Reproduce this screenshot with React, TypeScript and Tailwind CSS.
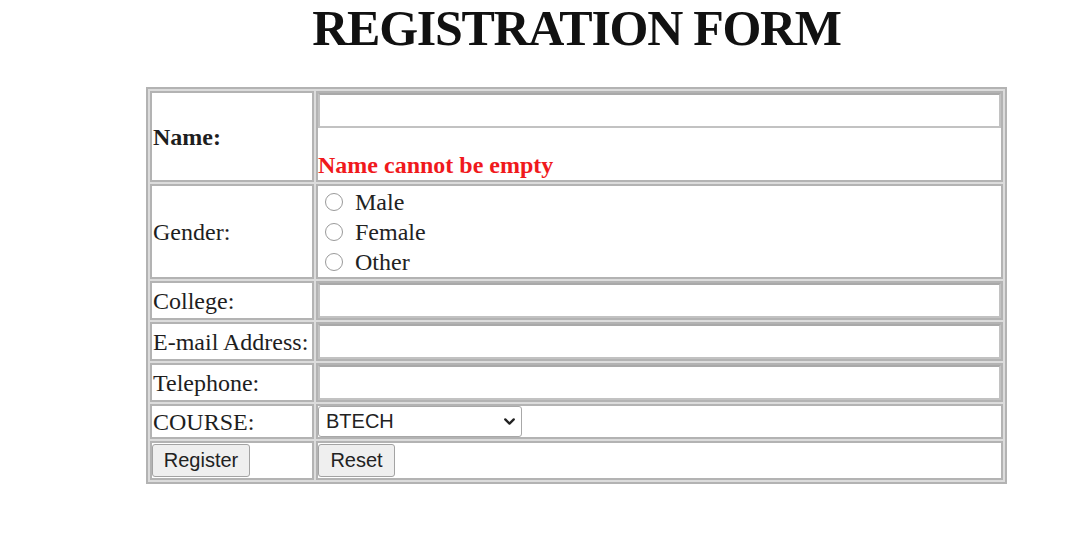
import { ChevronDown } from 'lucide-react'

const serif = "font-['Liberation_Serif','Times_New_Roman',serif]"
const sans = "font-['Liberation_Sans',Arial,sans-serif]"

const cell = 'border-2 border-[#b3b3b3] bg-white'

function Radio({ label }: { label: string }) {
  return (
    <div className="flex items-center h-[30px]">
      <span className="ml-[7px] w-[18px] h-[18px] rounded-full border-[1.5px] border-[#9a9a9a] bg-white" />
      <span className="ml-[12px] text-[24px] leading-[30px] text-[#222]">{label}</span>
    </div>
  )
}

function TextInput() {
  return <input type="text" className="w-full h-[35px] border-2 border-[#c2c2c2] border-t-[#a9a9a9] bg-white outline-none" />
}

export default function App() {
  return (
    <div className={`w-[1080px] h-[556px] bg-white ${serif} overflow-hidden`}>
      <div className="pt-[3px] ml-[146px] w-[861px] text-center">
        <h1 className="text-[50px] leading-[50px] font-bold text-[#111] tracking-[-1.3px]">REGISTRATION FORM</h1>
      </div>

      <div className="mt-[34px] ml-[146px] w-[861px] border-2 border-[#b3b3b3] bg-[#dcdcdc] p-[2px] grid grid-cols-[164px_1fr] gap-[2px] text-[24px] text-[#1e1e1e]">
        {/* Name */}
        <div className={`${cell} h-[91px] flex items-center pl-px font-bold`}>Name:</div>
        <div className={`${cell} h-[91px] flex flex-col justify-between`}>
          <TextInput />
          <span className="font-bold text-[#f0191c] leading-[27px] mb-[1px]">Name cannot be empty</span>
        </div>

        {/* Gender */}
        <div className={`${cell} h-[95px] flex items-center pl-px`}>Gender:</div>
        <div className={`${cell} h-[95px] flex flex-col justify-center`}>
          <Radio label="Male" />
          <Radio label="Female" />
          <Radio label="Other" />
        </div>

        {/* College / Email / Telephone */}
        {['College:', 'E-mail Address:', 'Telephone:'].map(l => (
          <>
            <div key={l} className={`${cell} h-[39px] flex items-center pl-px whitespace-nowrap`}>{l}</div>
            <div className={`${cell} h-[39px] flex items-center`}>
              <TextInput />
            </div>
          </>
        ))}

        {/* Course */}
        <div className={`${cell} h-[35px] flex items-center pl-px`}>COURSE:</div>
        <div className={`${cell} h-[35px] flex items-center`}>
          <div className="relative w-[204px] h-[31px]">
            <select className={`block appearance-none w-full h-[31px] py-0 border border-[#a8a8a8] rounded-[3px] bg-white pl-[7px] text-[20px] leading-[29px] text-[#222] ${sans} outline-none`}>
              <option>BTECH</option>
              <option>MTECH</option>
              <option>MBA</option>
            </select>
            <ChevronDown className="absolute right-[4px] top-[7px] w-[17px] h-[17px] text-[#222] pointer-events-none" strokeWidth={3.2} />
          </div>
        </div>

        {/* Buttons */}
        <div className={`${cell} h-[39px] flex items-center`}>
          <button className={`h-[33px] w-[98px] border border-[#a3a3a3] rounded-[3px] bg-[#efefef] text-[20px] leading-[31px] text-[#222] ${sans}`}>Register</button>
        </div>
        <div className={`${cell} h-[39px] flex items-center`}>
          <button className={`h-[33px] w-[77px] border border-[#a3a3a3] rounded-[3px] bg-[#efefef] text-[20px] leading-[31px] text-[#222] ${sans}`}>Reset</button>
        </div>
      </div>
    </div>
  )
}
